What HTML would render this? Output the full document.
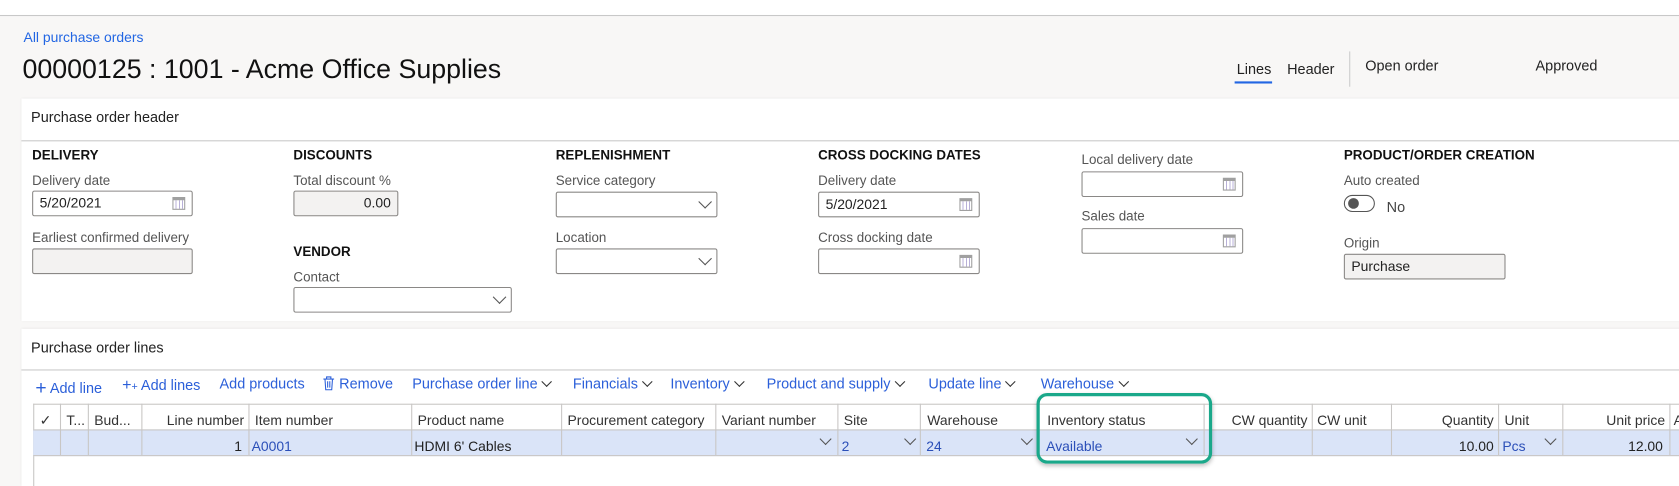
<!DOCTYPE html>
<html><head><meta charset="utf-8"><style>
*{box-sizing:border-box;margin:0;padding:0}
html,body{width:1679px;height:486px;overflow:hidden;background:#fff}
#w{position:absolute;left:0;top:0;width:1568px;height:454px;transform:scale(1.07079);transform-origin:0 0;background:#f8f7f6;font-family:"Liberation Sans",sans-serif;font-size:13px;color:#222;overflow:hidden}
.a{position:absolute;white-space:nowrap}
.top{left:0;top:0;width:1568px;height:15px;background:#fff;border-bottom:1px solid #c8c8c8}
.card{background:#fff;box-shadow:0 0 2px rgba(0,0,0,.12)}
.h{font-weight:bold;font-size:12.5px;color:#111}
.l{color:#555;font-size:12.5px}
.in{border:1px solid #8a8886;border-radius:2px;background:#fff;height:24px;padding:3px 6px;font-size:13px}
.ro{background:#f3f2f1}
.cal{position:absolute;right:6px;top:5px;width:12px;height:12px;border:1px solid #a0a0a0;border-top:3px solid #a0a0a0;background:repeating-linear-gradient(90deg,#fff 0 2px,#b8b0d8 2px 3px)}
.dd{position:absolute;right:6px;top:4px;width:9px;height:9px;border-right:1.3px solid #555;border-bottom:1.3px solid #555;transform:rotate(45deg)}
.blue{color:#2266e3}
.tb{top:351px;color:#2b5fd9;font-size:13.5px}
.cv{display:inline-block;width:7px;height:7px;border-right:1.2px solid #333;border-bottom:1.2px solid #333;transform:rotate(45deg);margin-left:5px;position:relative;top:-3px}
.c{position:absolute;top:0;height:48px;border-left:1px solid #c8c6c4}
.hd{position:absolute;top:8px;font-size:13px;color:#333}
.dt{position:absolute;top:32px;font-size:13px}
.gdd{position:absolute;top:29px;width:8px;height:8px;border-right:1.2px solid #555;border-bottom:1.2px solid #555;transform:rotate(45deg)}
</style></head><body><div id="w">
<div class="a top"></div>
<div class="a blue" style="left:22px;top:27px;font-size:13px">All purchase orders</div>
<div class="a" style="left:21px;top:51px;font-size:25px;color:#111">00000125 : 1001 - Acme Office Supplies</div>
<div class="a" style="left:1155px;top:57px;font-size:13.5px">Lines</div>
<div class="a" style="left:1153px;top:76px;width:35px;height:2px;background:#2266e3"></div>
<div class="a" style="left:1202px;top:57px;font-size:13.5px">Header</div>
<div class="a" style="left:1260px;top:48px;width:1px;height:33px;background:#ccc"></div>
<div class="a" style="left:1275px;top:54px;font-size:13.5px">Open order</div>
<div class="a" style="left:1434px;top:54px;font-size:13.5px">Approved</div>

<div class="a card" style="left:20px;top:92px;width:1560px;height:208px"></div>
<div class="a" style="left:29px;top:102px;font-size:13.5px">Purchase order header</div>
<div class="a" style="left:20px;top:131px;width:1548px;height:1px;background:#c8c8c8"></div>

<div class="a h" style="left:30px;top:138px">DELIVERY</div>
<div class="a l" style="left:30px;top:162px">Delivery date</div>
<div class="a in" style="left:30px;top:178px;width:150px">5/20/2021<span class="cal"></span></div>
<div class="a l" style="left:30px;top:215px">Earliest confirmed delivery</div>
<div class="a in ro" style="left:30px;top:232px;width:150px"></div>

<div class="a h" style="left:274px;top:138px">DISCOUNTS</div>
<div class="a l" style="left:274px;top:162px">Total discount %</div>
<div class="a in ro" style="left:274px;top:178px;width:98px;text-align:right">0.00</div>
<div class="a h" style="left:274px;top:228px">VENDOR</div>
<div class="a l" style="left:274px;top:252px">Contact</div>
<div class="a in" style="left:274px;top:268px;width:204px"><span class="dd"></span></div>

<div class="a h" style="left:519px;top:138px">REPLENISHMENT</div>
<div class="a l" style="left:519px;top:162px">Service category</div>
<div class="a in" style="left:519px;top:179px;width:151px"><span class="dd"></span></div>
<div class="a l" style="left:519px;top:215px">Location</div>
<div class="a in" style="left:519px;top:232px;width:151px"><span class="dd"></span></div>

<div class="a h" style="left:764px;top:138px">CROSS DOCKING DATES</div>
<div class="a l" style="left:764px;top:162px">Delivery date</div>
<div class="a in" style="left:764px;top:179px;width:151px">5/20/2021<span class="cal"></span></div>
<div class="a l" style="left:764px;top:215px">Cross docking date</div>
<div class="a in" style="left:764px;top:232px;width:151px"><span class="cal"></span></div>

<div class="a l" style="left:1010px;top:142px">Local delivery date</div>
<div class="a in" style="left:1010px;top:160px;width:151px"><span class="cal"></span></div>
<div class="a l" style="left:1010px;top:195px">Sales date</div>
<div class="a in" style="left:1010px;top:213px;width:151px"><span class="cal"></span></div>

<div class="a h" style="left:1255px;top:138px">PRODUCT/ORDER CREATION</div>
<div class="a l" style="left:1255px;top:162px">Auto created</div>
<div class="a" style="left:1255px;top:182px;width:29px;height:16px;border:1px solid #555;border-radius:8px"><span style="position:absolute;left:3px;top:2px;width:10px;height:10px;border-radius:5px;background:#555"></span></div>
<div class="a" style="left:1295px;top:186px;font-size:13.5px;color:#444">No</div>
<div class="a l" style="left:1255px;top:220px">Origin</div>
<div class="a in ro" style="left:1255px;top:237px;width:151px">Purchase</div>

<div class="a card" style="left:20px;top:307px;width:1560px;height:147px"></div>
<div class="a" style="left:29px;top:317px;font-size:13.5px">Purchase order lines</div>
<div class="a" style="left:20px;top:345px;width:1548px;height:1px;background:#c8c8c8"></div>

<div class="a tb" style="left:33px"><span style="font-size:18px;position:relative;top:1px">+</span> Add line</div>
<div class="a tb" style="left:114px"><span style="font-size:15px">+</span><span style="font-size:10px">+</span> Add lines</div>
<div class="a tb" style="left:205px">Add products</div>
<div class="a tb" style="left:301px"><svg width="12" height="14" viewBox="0 0 12 14" style="vertical-align:-2px"><path d="M1 3h10M4 3V1h4v2M2.5 3l.7 10h5.6l.7-10M5 5v6M7 5v6" fill="none" stroke="#2b5fd9" stroke-width="1"/></svg> Remove</div>
<div class="a tb" style="left:385px">Purchase order line<span class="cv"></span></div>
<div class="a tb" style="left:535px">Financials<span class="cv"></span></div>
<div class="a tb" style="left:626px">Inventory<span class="cv"></span></div>
<div class="a tb" style="left:716px">Product and supply<span class="cv"></span></div>
<div class="a tb" style="left:867px">Update line<span class="cv"></span></div>
<div class="a tb" style="left:972px">Warehouse<span class="cv"></span></div>

<div class="a" style="left:31px;top:377px;width:1537px;height:77px;border-left:1px solid #c8c6c4;border-top:1px solid #c8c6c4"></div>
<div class="a" style="left:31px;top:401px;width:1537px;height:25px;background:#dae4f8;border-top:1px solid #c8c6c4;border-bottom:1px solid #c8c6c4"></div>
<div class="a" style="left:31px;top:377px;width:1537px;height:49px">
<div class="c" style="left:25px"></div><div class="c" style="left:51px"></div><div class="c" style="left:101px"></div><div class="c" style="left:201px"></div><div class="c" style="left:353px"></div><div class="c" style="left:493px"></div><div class="c" style="left:637px"></div><div class="c" style="left:751px"></div><div class="c" style="left:828px"></div><div class="c" style="left:937px"></div><div class="c" style="left:1093px"></div><div class="c" style="left:1194px"></div><div class="c" style="left:1268px"></div><div class="c" style="left:1368px"></div><div class="c" style="left:1428px"></div><div class="c" style="left:1528px"></div>
<div class="hd" style="left:6px">✓</div>
<div class="hd" style="left:31px">T...</div>
<div class="hd" style="left:57px">Bud...</div>
<div class="hd" style="left:101px;width:96px;text-align:right">Line number</div>
<div class="hd" style="left:207px">Item number</div>
<div class="hd" style="left:359px">Product name</div>
<div class="hd" style="left:499px">Procurement category</div>
<div class="hd" style="left:643px">Variant number</div>
<div class="hd" style="left:757px">Site</div>
<div class="hd" style="left:835px">Warehouse</div>
<div class="hd" style="left:947px">Inventory status</div>
<div class="hd" style="left:1093px;width:97px;text-align:right">CW quantity</div>
<div class="hd" style="left:1199px">CW unit</div>
<div class="hd" style="left:1268px;width:96px;text-align:right">Quantity</div>
<div class="hd" style="left:1374px">Unit</div>
<div class="hd" style="left:1428px;width:96px;text-align:right">Unit price</div>
<div class="hd" style="left:1532px">A</div>
<div class="dt" style="left:101px;width:94px;text-align:right">1</div>
<div class="dt blue" style="left:204px;color:#2b4fb8">A0001</div>
<div class="dt" style="left:356px">HDMI 6' Cables</div>
<div class="gdd" style="left:736px"></div>
<div class="dt" style="left:755px;color:#2b4fb8">2</div><div class="gdd" style="left:815px"></div>
<div class="dt" style="left:834px;color:#2b4fb8">24</div><div class="gdd" style="left:924px"></div>
<div class="dt" style="left:946px;color:#2b4fb8">Available</div><div class="gdd" style="left:1078px"></div>
<div class="dt" style="left:1268px;width:96px;text-align:right">10.00</div>
<div class="dt" style="left:1372px;color:#2b4fb8">Pcs</div><div class="gdd" style="left:1413px"></div>
<div class="dt" style="left:1428px;width:94px;text-align:right">12.00</div>
</div>
<div class="a" style="left:968px;top:367px;width:164px;height:66px;border:3px solid #1aa88a;border-radius:10px;box-shadow:0 2px 4px rgba(0,0,0,.25)"></div>
</div></body></html>
